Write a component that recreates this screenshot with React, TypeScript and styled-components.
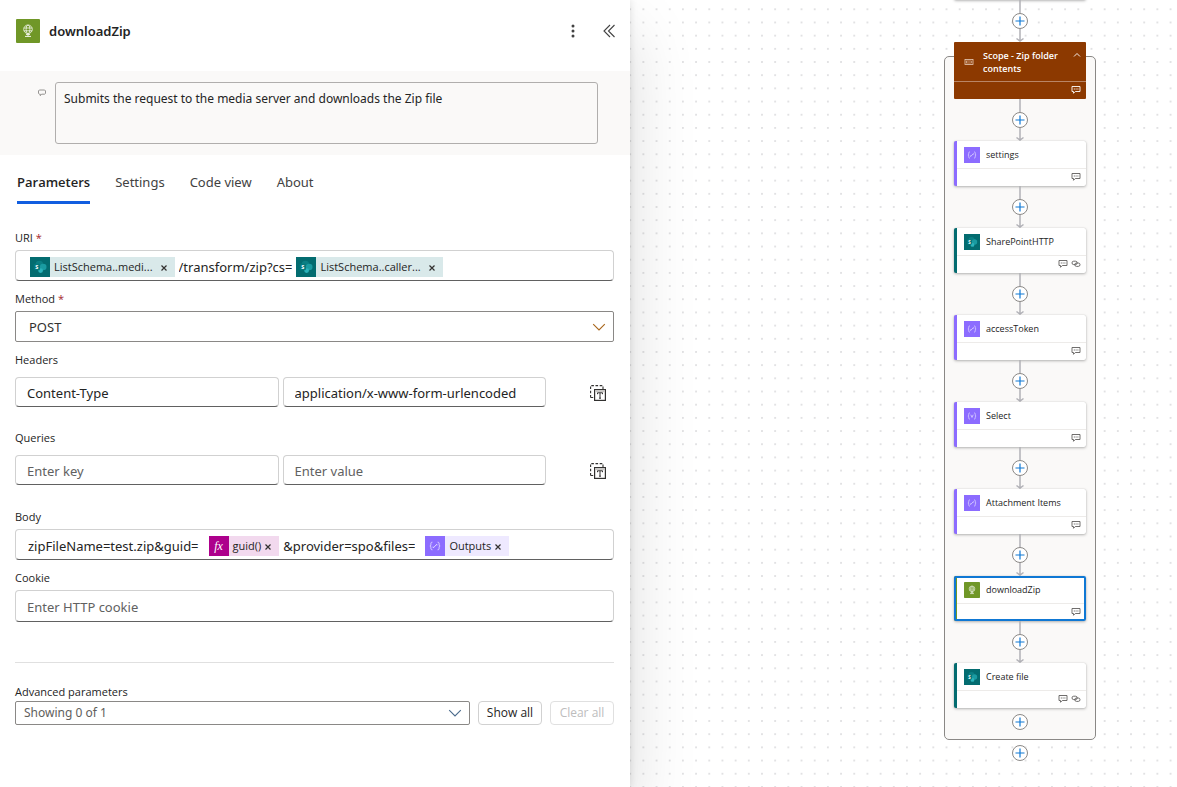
import React from "react";
import styled, { createGlobalStyle, css } from "styled-components";

const compactFont = `"Segoe UI", "Open Sans", sans-serif`;

const GlobalStyle = createGlobalStyle`
  * { box-sizing: border-box; }
  html, body, #root { height: 100%; }
  body {
    margin: 0;
    background: #fff;
    color: #242424;
    font-family: "Segoe UI", "Noto Sans", sans-serif;
    font-size: 12px;
    line-height: 16px;
  }
  button, input, select, textarea { font: inherit; color: inherit; margin: 0; }
  svg { display: block; flex: none; }
`;

/* ---------- icons ---------- */

const HttpIcon = ({ size }: { size: number }) => (
  <svg width={size} height={size} viewBox="0 0 24 24" aria-hidden="true">
    <rect width="24" height="24" rx="1" fill="#709727" />
    <g fill="none" stroke="#fff" strokeWidth="0.8" opacity="0.9">
      <circle cx="12" cy="10.3" r="4.3" />
      <ellipse cx="12" cy="10.3" rx="1.9" ry="4.3" />
      <path d="M7.9 9h8.2M7.9 11.8h8.2" />
      <path d="M12 14.6v3M9 17.4h6M10 15.4h4" strokeWidth="1" />
    </g>
  </svg>
);

const SharePointIcon = ({ size }: { size: number }) => (
  <svg width={size} height={size} viewBox="0 0 20 20" aria-hidden="true">
    <rect width="20" height="20" fill="#036c70" />
    <circle cx="9.4" cy="7.6" r="3.8" fill="#0b7f84" />
    <circle cx="13.2" cy="10" r="3.3" fill="#1a9ba1" />
    <circle cx="10.6" cy="13.6" r="2.4" fill="#2bb3bb" />
    <rect x="3.6" y="6.8" width="6.2" height="6.4" rx="0.6" fill="#03787c" />
    <text x="6.7" y="12" textAnchor="middle" fontSize="5.5" fontWeight="700" fill="#fff">
      S
    </text>
  </svg>
);

const ComposeIcon = ({ size, inner = "slash" }: { size: number; inner?: "slash" | "v" }) => (
  <svg width={size} height={size} viewBox="0 0 20 20" aria-hidden="true">
    <rect width="20" height="20" fill="#8c6cff" />
    <g fill="none" stroke="#fff" strokeWidth="0.9" opacity="0.8">
      <path d="M7.4 6.2c-1.3 0-1.5.6-1.5 1.6s0 2.1-1 2.2c1 .1 1 1.2 1 2.2s.2 1.6 1.5 1.6" />
      <path d="M12.6 6.2c1.3 0 1.5.6 1.5 1.6s0 2.1 1 2.2c-1 .1-1 1.2-1 2.2s-.2 1.6-1.5 1.6" />
      {inner === "slash" ? (
        <path d="M8.3 11.9l3.4-3.6M8 10.6l.3 1.3M12 9.4l-.3-1.2" />
      ) : (
        <path d="M8.5 8.4l1.5 3.4 1.5-3.4" />
      )}
    </g>
  </svg>
);

const FxIcon = () => (
  <svg width="20" height="20" viewBox="0 0 20 20" aria-hidden="true">
    <rect width="20" height="20" fill="#ad008c" />
    <text
      x="9.5"
      y="13.5"
      textAnchor="middle"
      fontFamily="Liberation Serif, serif"
      fontStyle="italic"
      fontSize="12"
      fill="#fff"
    >
      fx
    </text>
  </svg>
);

const CommentIcon = ({ color = "#605e5c" }: { color?: string }) => (
  <svg width="10" height="10" viewBox="0 0 10 10" fill="none" stroke={color} aria-hidden="true">
    <path d="M1 1.5h8v5H4.3L2.5 8.3V6.5H1z" strokeWidth="0.9" />
    <path d="M2.8 4h1M4.6 4h1M6.4 4h1" strokeWidth="1.2" />
  </svg>
);

const NoteIcon = () => (
  <svg width="8" height="8" viewBox="0 0 8 8" fill="none" stroke="#8a8886" aria-hidden="true">
    <path d="M1.3 1h5.400l.8.9v2.400l-.8.9H3.600L2.300 6.700V5.200h-1l-.8-.9V1.900z" strokeWidth="0.9" />
  </svg>
);

const LinkIcon = () => (
  <svg width="10" height="10" viewBox="0 0 10 10" fill="none" stroke="#605e5c" strokeWidth="0.9" aria-hidden="true">
    <rect x="1" y="2.2" width="5.2" height="3.4" rx="1.7" />
    <rect x="3.8" y="4" width="5.2" height="3.4" rx="1.7" />
  </svg>
);

const ScopeIcon = () => (
  <svg width="10" height="8" viewBox="0 0 10 8" fill="none" stroke="#e8cdb8" strokeWidth="0.8" aria-hidden="true">
    <rect x="1" y="1.5" width="8" height="5" />
    <rect x="2.5" y="3" width="5" height="2" strokeWidth="0.6" />
  </svg>
);

const MoreIcon = () => (
  <svg width="16" height="16" viewBox="0 0 16 16" fill="#424242" aria-hidden="true">
    <circle cx="8" cy="3" r="1.5" />
    <circle cx="8" cy="8" r="1.5" />
    <circle cx="8" cy="13" r="1.5" />
  </svg>
);

const CollapseIcon = () => (
  <svg width="16" height="16" viewBox="0 0 16 16" fill="none" stroke="#424242" strokeWidth="1.1" aria-hidden="true">
    <path d="M9 2L3 8l6 6M13.5 2l-6 6 6 6" />
  </svg>
);

const ChevronDown = ({ color }: { color: string }) => (
  <svg width="14" height="14" viewBox="0 0 14 14" fill="none" stroke={color} strokeWidth="1.1" aria-hidden="true">
    <path d="M1.2 4.2L7 10l5.8-5.8" />
  </svg>
);

const ChevronUp = () => (
  <svg width="8" height="8" viewBox="0 0 8 8" fill="none" stroke="#fff" strokeWidth="0.9" aria-hidden="true">
    <path d="M1 5.5l3-3 3 3" />
  </svg>
);

const TextModeIcon = () => (
  <svg width="16" height="16" viewBox="0 0 16 16" fill="none" stroke="#323130" aria-hidden="true">
    <path d="M.6 12.500V.6H13V4M.6 12.500H4" strokeDasharray="2.600 1.600" strokeWidth="1.100" />
    <rect x="4.600" y="4.600" width="10.800" height="10.800" fill="#fff" strokeWidth="1.200" />
    <path d="M5.200 6.200h9.600" stroke="#c8c6c4" strokeWidth="2" />
    <path d="M7.500 9.200V7.800h5v1.400M10 7.800V13M9 13.200h2" strokeWidth="1" />
  </svg>
);

const CrossIcon = () => (
  <svg width="6" height="6" viewBox="0 0 6 6" fill="none" stroke="currentColor" strokeWidth="1.2" aria-hidden="true">
    <path d="M.5.5l5 5M5.500.5l-5 5" />
  </svg>
);

/* ---------- details panel ---------- */

const Page = styled.div`
  display: flex;
  height: 100%;
  min-height: 100vh;
  overflow: hidden;
`;

const Panel = styled.aside`
  flex: 0 0 630px;
  max-width: 100%;
  background: #fff;
  z-index: 1;
  box-shadow: 0 0 8px rgba(0, 0, 0, 0.12), 0 32px 64px rgba(0, 0, 0, 0.14);
`;

const PanelHeader = styled.header`
  display: flex;
  align-items: center;
  gap: 9px;
  padding: 19px 13px 28px 16px;
`;

const PanelTitle = styled.h1`
  flex: 1;
  margin: 0;
  font-size: 13px;
  line-height: 20px;
  font-weight: 600;
`;

const IconButton = styled.button`
  display: flex;
  align-items: center;
  justify-content: center;
  width: 24px;
  height: 24px;
  padding: 0;
  border: 0;
  background: none;
`;

const ModeButton = styled(IconButton)`
  justify-self: end;
  height: 26px;
  margin-right: 4px;
  padding-top: 2px;
`;

const HeaderActions = styled.div`
  display: flex;
  gap: 12px;
  margin-right: -4px;
`;

const CommentBand = styled.div`
  display: flex;
  gap: 9px;
  padding: 11px 32px 11px 38px;
  background: #faf9f8;
`;

const CommentMark = styled.div`
  padding-top: 7px;
`;

const CommentBox = styled.textarea`
  flex: 1;
  height: 62px;
  padding: 8px;
  border: 1px solid #b0aead;
  border-radius: 3px;
  background: transparent;
  resize: none;
  display: block;
`;

const TabList = styled.div`
  display: flex;
  gap: 25px;
  padding: 17px 17px 0;
`;

const Tab = styled.button<{ $active?: boolean }>`
  height: 32px;
  padding: 0 0 11px;
  border: 0;
  border-bottom: 3px solid ${(p) => (p.$active ? "#115ee0" : "transparent")};
  background: none;
  color: ${(p) => (p.$active ? "#242424" : "#424242")};
  font-family: ${(p) => (p.$active ? compactFont : "inherit")};
  font-size: 13px;
  line-height: 20px;
  font-weight: ${(p) => (p.$active ? 600 : 400)};
`;

const Form = styled.form`
  display: flex;
  flex-direction: column;
  padding: 26px 16px 0 15px;
`;

const Field = styled.div<{ $wide?: boolean; $after?: number }>`
  display: flex;
  flex-direction: column;
  gap: ${(p) => (p.$wide ? 9 : 4)}px;
  margin-bottom: ${(p) => p.$after ?? 10}px;
`;

const Label = styled.label`
  font-family: ${compactFont};
  font-size: 11px;
  line-height: 16px;
`;

const Required = styled.span`
  color: #a4262c;
`;

const boxStyle = css`
  border: 1px solid #d1d1d1;
  border-bottom-color: #616161;
  border-radius: 4px;
  background: #fff;
`;

const TextInput = styled.input<{ $tall?: boolean }>`
  ${boxStyle}
  width: 100%;
  min-width: 0;
  height: ${(p) => (p.$tall ? 32 : 30)}px;
  padding: 2px 11px 0;
  font-size: 13px;
  &::placeholder { color: #616161; opacity: 1; }
`;

const TokenField = styled.div<{ $inset?: boolean }>`
  ${boxStyle}
  display: flex;
  align-items: center;
  height: 31px;
  padding: 2px 11px 0 ${(p) => (p.$inset ? 14 : 8)}px;
`;

const Segment = styled.input<{ $roomy?: boolean }>`
  field-sizing: content;
  height: 20px;
  padding: 0 ${(p) => (p.$roomy ? 10 : 4)}px 0 4px;
  border: 0;
  background: none;
  outline: none;
  font-size: 13px;
`;

const SegmentRest = styled(Segment)`
  flex: 1;
  min-width: 0;
`;

const Chip = styled.span<{ $tint: string }>`
  display: inline-flex;
  align-items: center;
  gap: 4px;
  height: 20px;
  padding-right: 5px;
  background: ${(p) => p.$tint};
  font-family: ${compactFont};
  font-size: 11px;
`;

const ChipRemove = styled.button<{ $tight?: boolean }>`
  display: flex;
  padding: 4px 3px 2px ${(p) => (p.$tight ? 0 : 4)}px;
  border: 0;
  background: none;
  color: #323130;
`;

const SelectWrap = styled.div`
  display: grid;
  flex: 1;
  align-items: center;
  > * { grid-area: 1 / 1; }
  > svg { justify-self: end; margin-right: 8px; pointer-events: none; }
`;

const Select = styled.select<{ $small?: boolean }>`
  appearance: none;
  width: 100%;
  height: ${(p) => (p.$small ? 24 : 31)}px;
  padding: 0 ${(p) => (p.$small ? 8 : 13)}px;
  border: 1px solid #8a8886;
  border-radius: 2px;
  background: #fff;
  color: ${(p) => (p.$small ? "#605e5c" : "#323130")};
  font-size: ${(p) => (p.$small ? 12 : 13)}px;
`;

const PairRow = styled.div`
  display: grid;
  grid-template-columns: 1fr 1fr 64px;
  column-gap: 4px;
  align-items: center;
`;

const Divider = styled.hr`
  width: 100%;
  margin: 30px 0 21px;
  border: 0;
  border-top: 1px solid #e0e0e0;
`;

const AdvancedRow = styled.div`
  display: flex;
  gap: 8px;
  margin-top: 1px;
`;

const SmallButton = styled.button`
  width: 64px;
  height: 24px;
  padding: 0;
  border: 1px solid #d1d1d1;
  border-radius: 4px;
  background: #fff;
  font-family: ${compactFont};
  &:disabled { color: #bdbdbd; border-color: #e0e0e0; }
`;

/* ---------- flow canvas ---------- */

const Canvas = styled.main`
  position: relative;
  flex: 1;
  min-width: 240px;
  display: flex;
  flex-direction: column;
  align-items: flex-end;
  padding-right: 81px;
  overflow: hidden;
  font-family: ${compactFont};
`;

const DotLayer = styled.svg`
  position: absolute;
  inset: 0;
  width: 100%;
  height: 100%;
`;

const Flow = styled.div`
  position: relative;
  display: flex;
  flex-direction: column;
  align-items: center;
  width: 152px;
  margin-top: -45px;
`;

const ScopeGroup = styled.section`
  display: flex;
  flex-direction: column;
  align-items: center;
  width: 100%;
  margin-top: 14px;
  padding-bottom: 9px;
  border: 1px solid #8a8886;
  border-radius: 5px;
  background: #faf9f8;
`;

const ScopeCard = styled.div`
  width: 132px;
  height: 57px;
  margin-top: -15px;
  border-radius: 1px;
  background: #8c3900;
  color: #fff;
`;

const ScopeTop = styled.div`
  display: flex;
  align-items: center;
  gap: 9px;
  height: 40px;
  padding: 0 5px 0 10px;
  border-bottom: 1px solid #b98565;
`;

const ScopeTitle = styled.h2`
  flex: 1;
  margin: 0;
  font-size: 9px;
  line-height: 13px;
  font-weight: 600;
`;

const ScopeToggle = styled.button`
  align-self: flex-start;
  padding: 9px 0 0;
  border: 0;
  background: none;
`;

const CardFooter = styled.div`
  display: flex;
  align-items: center;
  justify-content: flex-end;
  gap: 3px;
  height: 16px;
  padding-right: 5px;
`;

const Card = styled.article<{ $accent: string; $selected?: boolean }>`
  width: 132px;
  height: 45px;
  border-left: 3px solid ${(p) => p.$accent};
  border-radius: 2px;
  background: #fff;
  box-shadow: 0 1px 3px rgba(0, 0, 0, 0.28), 0 0 1px rgba(0, 0, 0, 0.2);
  ${(p) =>
    p.$selected &&
    css`
      outline: 2px solid #0f78d4;
      outline-offset: -2px;
    `}
`;

const CardTop = styled.div`
  display: flex;
  align-items: center;
  gap: 6px;
  height: 28px;
  padding-left: 7px;
  border-bottom: 1px solid #edebe9;
`;

const CardTitle = styled.h3`
  margin: 0;
  font-size: 9px;
  line-height: 13px;
  font-weight: 500;
  color: #242424;
`;

const Connector = styled.div`
  display: grid;
  justify-items: center;
  align-items: center;
  height: 42px;
  > * { grid-area: 1 / 1; }
`;

const AddButton = styled.button`
  display: block;
  padding: 0;
  border: 0;
  background: none;
`;

const AddStep = () => (
  <AddButton type="button" aria-label="Insert a new step">
    <svg width="16" height="16" viewBox="0 0 16 16" fill="none" aria-hidden="true">
      <circle cx="8" cy="8" r="7.5" fill="#fff" stroke="#8a8886" />
      <path d="M8 3.5v9M3.5 8h9" stroke="#0f78d4" strokeWidth="1.2" />
    </svg>
  </AddButton>
);

const Edge = () => (
  <Connector>
    <svg width="10" height="42" viewBox="0 0 10 42" fill="none" stroke="#b1b1b7" strokeWidth="1.5" aria-hidden="true">
      <path d="M5 0v41M1.5 38.5L5 41l3.5-2.5" />
    </svg>
    <AddStep />
  </Connector>
);

const TailAdd = styled.div<{ $inside?: boolean }>`
  padding-top: ${(p) => (p.$inside ? 6 : 5)}px;
`;

const PURPLE = "#8c6cff";
const TEAL = "#036c70";

const steps: { title: string; accent: string; icon: React.ReactNode; linked?: boolean; selected?: boolean }[] = [
  { title: "settings", accent: PURPLE, icon: <ComposeIcon size={16} /> },
  { title: "SharePointHTTP", accent: TEAL, icon: <SharePointIcon size={16} />, linked: true },
  { title: "accessToken", accent: PURPLE, icon: <ComposeIcon size={16} /> },
  { title: "Select", accent: PURPLE, icon: <ComposeIcon size={16} inner="v" /> },
  { title: "Attachment Items", accent: PURPLE, icon: <ComposeIcon size={16} /> },
  { title: "downloadZip", accent: "#709727", icon: <HttpIcon size={16} />, selected: true },
  { title: "Create file", accent: TEAL, icon: <SharePointIcon size={16} />, linked: true },
];

const tabs = ["Parameters", "Settings", "Code view", "About"];

export default function App() {
  return (
    <>
      <GlobalStyle />
      <Page>
        <Panel>
          <PanelHeader>
            <HttpIcon size={24} />
            <PanelTitle>downloadZip</PanelTitle>
            <HeaderActions>
              <IconButton type="button" aria-label="More actions">
                <MoreIcon />
              </IconButton>
              <IconButton type="button" aria-label="Collapse panel">
                <CollapseIcon />
              </IconButton>
            </HeaderActions>
          </PanelHeader>

          <CommentBand>
            <CommentMark>
              <NoteIcon />
            </CommentMark>
            <CommentBox
              aria-label="Description"
              defaultValue="Submits the request to the media server and downloads the Zip file"
            />
          </CommentBand>

          <TabList role="tablist">
            {tabs.map((name, i) => (
              <Tab key={name} type="button" role="tab" aria-selected={i === 0} $active={i === 0}>
                {name}
              </Tab>
            ))}
          </TabList>

          <Form>
            <Field>
              <Label htmlFor="uri">
                URI <Required>*</Required>
              </Label>
              <TokenField $inset>
                <Chip $tint="#d9e9ea">
                  <SharePointIcon size={20} />
                  ListSchema..medi...
                  <ChipRemove type="button" aria-label="Remove token">
                    <CrossIcon />
                  </ChipRemove>
                </Chip>
                <Segment id="uri" defaultValue="/transform/zip?cs=" />
                <Chip $tint="#d9e9ea">
                  <SharePointIcon size={20} />
                  ListSchema..caller...
                  <ChipRemove type="button" aria-label="Remove token">
                    <CrossIcon />
                  </ChipRemove>
                </Chip>
                <SegmentRest aria-label="URI, end" />
              </TokenField>
            </Field>

            <Field>
              <Label htmlFor="method">
                Method <Required>*</Required>
              </Label>
              <SelectWrap>
                <Select id="method" defaultValue="POST">
                  <option>POST</option>
                </Select>
                <ChevronDown color="#a8661c" />
              </SelectWrap>
            </Field>

            <Field $wide $after={23}>
              <Label htmlFor="header-key">Headers</Label>
              <PairRow>
                <TextInput id="header-key" defaultValue="Content-Type" />
                <TextInput aria-label="Header value" defaultValue="application/x-www-form-urlencoded" />
                <ModeButton type="button" aria-label="Switch headers to text mode">
                  <TextModeIcon />
                </ModeButton>
              </PairRow>
            </Field>

            <Field $wide $after={24}>
              <Label htmlFor="query-key">Queries</Label>
              <PairRow>
                <TextInput id="query-key" placeholder="Enter key" />
                <TextInput aria-label="Query value" placeholder="Enter value" />
                <ModeButton type="button" aria-label="Switch queries to text mode">
                  <TextModeIcon />
                </ModeButton>
              </PairRow>
            </Field>

            <Field>
              <Label htmlFor="body">Body</Label>
              <TokenField>
                <Segment id="body" $roomy defaultValue="zipFileName=test.zip&guid=" />
                <Chip $tint="#f2d9ee">
                  <FxIcon />
                  guid()
                  <ChipRemove type="button" aria-label="Remove token" $tight>
                    <CrossIcon />
                  </ChipRemove>
                </Chip>
                <Segment aria-label="Body, middle" $roomy defaultValue="&provider=spo&files=" />
                <Chip $tint="#eee9ff">
                  <ComposeIcon size={20} />
                  Outputs
                  <ChipRemove type="button" aria-label="Remove token" $tight>
                    <CrossIcon />
                  </ChipRemove>
                </Chip>
                <SegmentRest aria-label="Body, end" />
              </TokenField>
            </Field>

            <Field>
              <Label htmlFor="cookie">Cookie</Label>
              <TextInput id="cookie" $tall placeholder="Enter HTTP cookie" />
            </Field>

            <Divider />

            <Label htmlFor="advanced">Advanced parameters</Label>
            <AdvancedRow>
              <SelectWrap>
                <Select id="advanced" $small defaultValue="Showing 0 of 1">
                  <option>Showing 0 of 1</option>
                </Select>
                <ChevronDown color="#4a6a8c" />
              </SelectWrap>
              <SmallButton type="button">Show all</SmallButton>
              <SmallButton type="button" disabled>
                Clear all
              </SmallButton>
            </AdvancedRow>
          </Form>
        </Panel>

        <Canvas>
          <DotLayer aria-hidden="true">
            <defs>
              <pattern id="dots" width="13.18" height="13.18" patternUnits="userSpaceOnUse" x="-6.4" y="2.7">
                <circle cx="6.59" cy="6.59" r="0.6" fill="#a8a8ad" />
              </pattern>
            </defs>
            <rect width="100%" height="100%" fill="url(#dots)" />
          </DotLayer>
          <Flow>
            <Card $accent={PURPLE} />
            <Edge />
            <ScopeGroup>
              <ScopeCard>
                <ScopeTop>
                  <ScopeIcon />
                  <ScopeTitle>Scope - Zip folder contents</ScopeTitle>
                  <ScopeToggle type="button" aria-label="Collapse scope">
                    <ChevronUp />
                  </ScopeToggle>
                </ScopeTop>
                <CardFooter>
                  <CommentIcon color="#fff" />
                </CardFooter>
              </ScopeCard>
              {steps.map((step) => (
                <React.Fragment key={step.title}>
                  <Edge />
                  <Card $accent={step.accent} $selected={step.selected}>
                    <CardTop>
                      {step.icon}
                      <CardTitle>{step.title}</CardTitle>
                    </CardTop>
                    <CardFooter>
                      <CommentIcon />
                      {step.linked && <LinkIcon />}
                    </CardFooter>
                  </Card>
                </React.Fragment>
              ))}
              <TailAdd $inside>
                <AddStep />
              </TailAdd>
            </ScopeGroup>
            <TailAdd>
              <AddStep />
            </TailAdd>
          </Flow>
        </Canvas>
      </Page>
    </>
  );
}
